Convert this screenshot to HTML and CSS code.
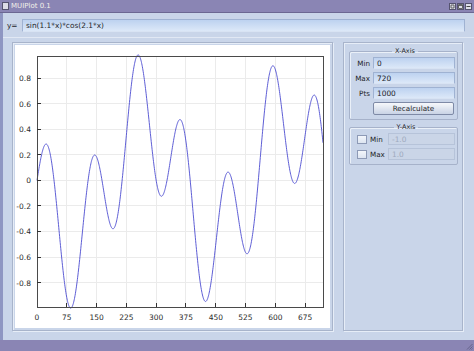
FILE: index.html
```html
<!DOCTYPE html>
<html lang="en">
<head>
  <meta charset="UTF-8">
  <title>MUIPlot 0.1</title>
  <link rel="stylesheet" href="styles.css">
</head>
<body>
  <div class="window">
    <div class="titlebar">
      <span class="app-icon"></span>
      <span class="title">MUIPlot 0.1</span>
      <span class="win-btns">
        <span class="wbtn"><svg width="5" height="5" viewBox="0 0 5 5"><path d="M1 1h3v3h-3z" fill="none" stroke="#444" stroke-width="0.8"/></svg></span>
        <span class="wbtn"><svg width="5" height="5" viewBox="0 0 5 5"><path d="M0.5 0.5h4v4h-4z M0.5 1.5h4" fill="none" stroke="#444" stroke-width="0.8"/></svg></span>
        <span class="wbtn"><svg width="5" height="5" viewBox="0 0 5 5"><path d="M0.5 2.5h4" fill="none" stroke="#444" stroke-width="1"/></svg></span>
      </span>
    </div>

    <div class="frame">
      <div class="formula">
        <span class="formula-label">y=</span>
        <div class="field">sin(1.1*x)*cos(2.1*x)</div>
      </div>

      <div class="main">
        <div class="plot-frame">
          <div class="plot-panel">
            <svg class="plot" width="315" height="283" viewBox="0 0 315 283">
              <g class="grid">
                <path d="M51.5 11v251M81.5 11v251M111.5 11v251M141.5 11v251M170.5 11v251M200.5 11v251M230.5 11v251M260.5 11v251M290.5 11v251"/>
                <path d="M22 33.5h286M22 58.5h286M22 84.5h286M22 109.5h286M22 135.5h286M22 160.5h286M22 186.5h286M22 212.5h286M22 237.5h286"/>
              </g>
              <polyline id="curve" class="curve" points=""/>
              <rect class="axes" x="22.5" y="11.5" width="286" height="251"/>
              <g class="ticks">
                <path d="M22 33.5h4M22 58.5h4M22 84.5h4M22 109.5h4M22 135.5h4M22 160.5h4M22 186.5h4M22 212.5h4M22 237.5h4"/>
                <path d="M51.5 262v-4M81.5 262v-4M111.5 262v-4M141.5 262v-4M170.5 262v-4M200.5 262v-4M230.5 262v-4M260.5 262v-4M290.5 262v-4"/>
              </g>
              <g class="ylabels">
                <text x="16" y="36">0.8</text>
                <text x="16" y="61.5">0.6</text>
                <text x="16" y="87">0.4</text>
                <text x="16" y="112.5">0.2</text>
                <text x="16" y="138">0</text>
                <text x="16" y="163.5">-0.2</text>
                <text x="16" y="189">-0.4</text>
                <text x="16" y="215">-0.6</text>
                <text x="16" y="240.5">-0.8</text>
              </g>
              <g class="xlabels">
                <text x="22" y="275">0</text>
                <text x="51.8" y="275">75</text>
                <text x="81.6" y="275">150</text>
                <text x="111.4" y="275">225</text>
                <text x="141.2" y="275">300</text>
                <text x="171" y="275">375</text>
                <text x="200.8" y="275">450</text>
                <text x="230.5" y="275">525</text>
                <text x="260.3" y="275">600</text>
                <text x="290.1" y="275">675</text>
              </g>
            </svg>
          </div>
        </div>

        <div class="side">
          <fieldset class="group x-group">
            <legend>X-Axis</legend>
            <span class="lbl">Min</span><div class="field">0</div>
            <span class="lbl">Max</span><div class="field">720</div>
            <span class="lbl">Pts</span><div class="field">1000</div>
            <div class="button">Recalculate</div>
          </fieldset>
          <fieldset class="group y-group">
            <legend>Y-Axis</legend>
            <span class="check"></span><span class="lbl">Min</span><div class="field disabled">-1.0</div>
            <span class="check"></span><span class="lbl">Max</span><div class="field disabled">1.0</div>
          </fieldset>
        </div>
      </div>
    </div>

    <div class="statusbar">
      <svg class="grip" width="7" height="7" viewBox="0 0 7 7"><path d="M6.5 1L1 6.5M6.5 3.5L3.5 6.5M6.5 5.5L5.5 6.5" stroke="#5d5a80" stroke-width="0.8"/></svg>
    </div>
  </div>
  <script src="plot.js"></script>
</body>
</html>
```

FILE: styles.css
```css
* {margin:0; padding:0; box-sizing:border-box;}
body {width:474px; height:351px; overflow:hidden; background:#c9d5e9; color:#1e1e28; font-family:"DejaVu Sans", sans-serif; font-size:7.2px;}

.window {display:flex; flex-direction:column; height:351px;}

.titlebar {display:flex; align-items:center; height:13px; padding:0 2px; background:#8a85b4; border-bottom:1px solid #6b6792; color:#f3f1ea;}
.app-icon {width:7px; height:8px; margin-right:2px; background:#dcdce6; border:1px solid #55536f;}
.title {font-size:7px;}
.win-btns {display:flex; gap:1px; margin-left:auto;}
.wbtn {display:flex; align-items:center; justify-content:center; width:7px; height:7px; background:#dedfea; border:1px solid #55536f;}

.frame {flex:1; display:flex; flex-direction:column; border-left:3px solid #8e96c2; background:#c9d5e9;}

.formula {display:flex; align-items:center; gap:5px; padding:6px 9px 5px 4px; border-bottom:1px solid #e1e8f4;}
.formula-label {width:10px; font-size:7.4px;}
.field {height:12px; padding:0 3px; line-height:11px; font-size:7.4px; background:linear-gradient(#bdd2f0, #dce8f8); border:1px solid #9fb2d2; border-bottom-color:#d8e3f3; white-space:nowrap;}
.formula .field {flex:1; height:13px; line-height:12px;}
.field.disabled {background:#cad5e7; border-color:#b6c3d9; color:#9ea9bd;}

.main {flex:1; display:flex; gap:10px; padding:4px 11px 9px 9px;}
.plot-frame {width:321px; padding:2px; border:1px solid #a8b4cb; box-shadow:inset 1px 1px 0 #e6edf7, 1px 1px 0 #e6edf7;}
.plot-panel {height:100%; background:#fff;}
.plot {display:block;}
.plot .grid path {stroke:#ebebeb; stroke-width:1; fill:none;}
.plot .curve {fill:none; stroke:#4c4cd0; stroke-width:0.9;}
.plot .axes {fill:none; stroke:#4a4a4a; stroke-width:1;}
.plot .ticks path {stroke:#333; stroke-width:1; fill:none;}
.plot text {font-family:"DejaVu Sans", sans-serif; font-size:7.5px; fill:#2a2a2a;}
.plot .ylabels text {text-anchor:end;}
.plot .xlabels text {text-anchor:middle;}

.side {flex:1; display:flex; flex-direction:column; gap:3px; padding:4px 4px 0 5px; border:1px solid #a8b4cb; box-shadow:inset 1px 1px 0 #e6edf7, 1px 1px 0 #e6edf7;}

.group {display:grid; row-gap:3px; column-gap:3px; align-items:center; border:1px solid #a6b2ca; border-radius:2px; box-shadow:inset 1px 1px 0 #eaf0f8;}
.group legend {margin:0 auto; padding:0 3px; font-size:6.5px; line-height:8px;}
.x-group {grid-template-columns:15px 1fr; padding:2px 2px 4px 5px;}
.y-group {grid-template-columns:10px 15px 1fr; padding:2px 2px 4px 7px;}
.lbl {text-align:right;}
.y-group .lbl {text-align:left;}

.button {grid-column:2; height:13px; margin-right:1px; line-height:11px; text-align:center; background:linear-gradient(#f6f8fb, #c9d3e5); border:1px solid #7e8aa6; border-radius:2px;}
.check {width:10px; height:9px; background:linear-gradient(#f3f6fb, #dde5f1); border:1px solid #8d9ab6;}

.statusbar {display:flex; align-items:flex-end; justify-content:flex-end; height:11px; padding:0 1px 1px 0; background:#8a85b4;}
```

FILE: plot.js
```js
// y = sin(1.1x) * cos(2.1x), x in degrees, 0..720
var rad = Math.PI / 180;
var points = [];
for (var i = 0; i < 1000; i++) {
  var x = i * 720 / 999;
  var y = Math.sin(1.1 * x * rad) * Math.cos(2.1 * x * rad);
  var px = 22 + x * 286 / 720;
  var py = 135.4 - y * 128;
  points.push(px.toFixed(2) + ',' + py.toFixed(2));
}
document.getElementById('curve').setAttribute('points', points.join(' '));
```
